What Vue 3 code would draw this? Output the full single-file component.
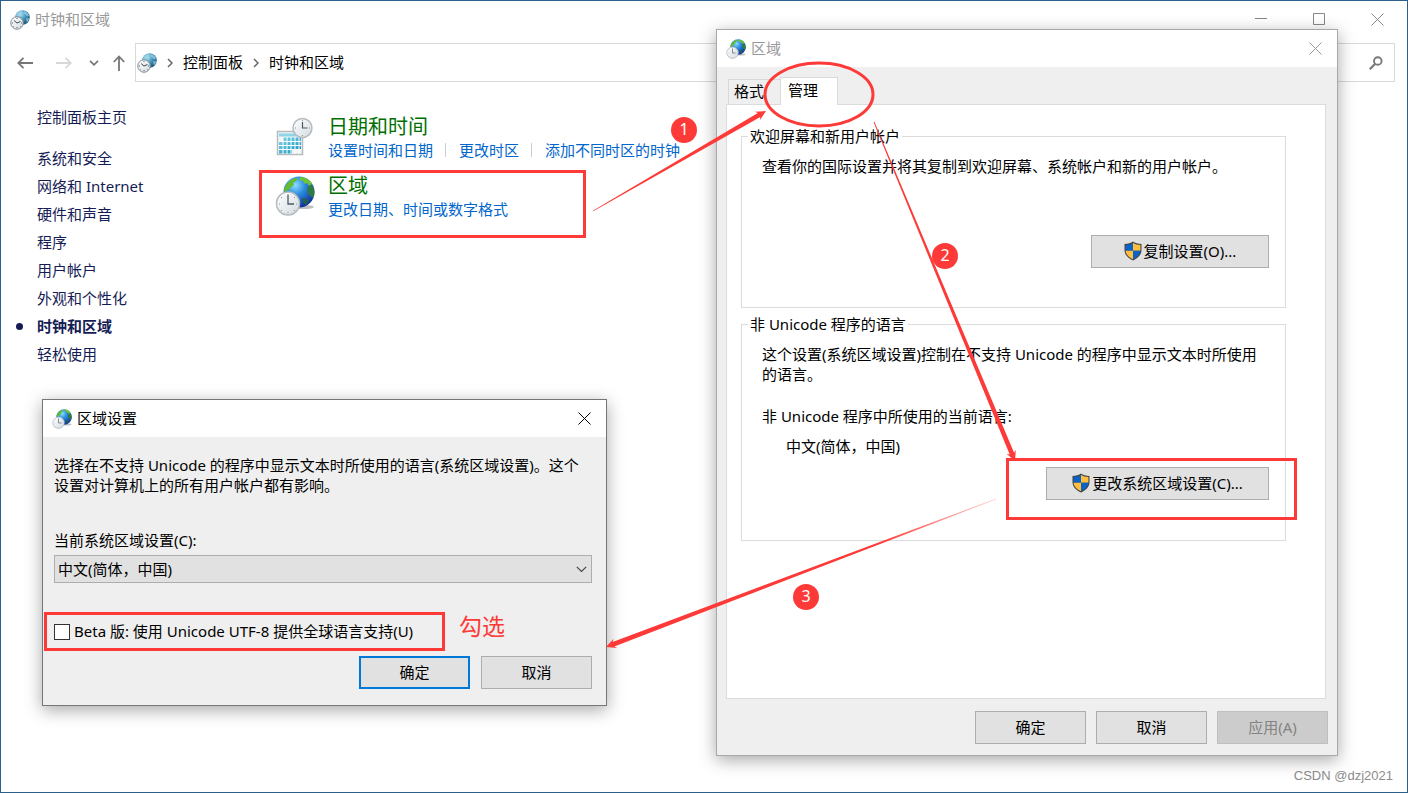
<template>
  <div class="desktop">
    <svg class="icon-defs" aria-hidden="true">
      <defs>
        <radialGradient id="oceanBlue" cx="38%" cy="28%" r="75%">
          <stop offset="0" stop-color="#8fdcff" />
          <stop offset="0.4" stop-color="#2f8fe0" />
          <stop offset="1" stop-color="#0b2c9c" />
        </radialGradient>
        <radialGradient id="oceanTeal" cx="35%" cy="28%" r="75%">
          <stop offset="0" stop-color="#b9e2f2" />
          <stop offset="0.45" stop-color="#4a9fc6" />
          <stop offset="1" stop-color="#1a5579" />
        </radialGradient>
        <linearGradient id="clockFace" x1="0" y1="0" x2="1" y2="1">
          <stop offset="0" stop-color="#ffffff" />
          <stop offset="1" stop-color="#d3dbe0" />
        </linearGradient>
        <linearGradient id="calendarCells" x1="0" y1="0" x2="1" y2="1">
          <stop offset="0" stop-color="#7fd4ea" />
          <stop offset="1" stop-color="#1593bd" />
        </linearGradient>
      </defs>
      <symbol id="icon-region" viewBox="0 0 40 40">
        <ellipse cx="28" cy="31" rx="11" ry="2" fill="#000" opacity="0.25" />
        <circle cx="24" cy="16" r="15.5" fill="url(#oceanBlue)" />
        <path d="M9 14c1-5 5-10 11-12l3 1-2 2-3 2 1 2-3 2-2 3-3 1-1 3z" fill="#62bb35" />
        <path d="M25 1c6 0 10 3 12 7l-3 2-2-3-2 1-2-3-3-1z" fill="#6cc436" />
        <path d="M33 10l4-1c2 3 3 7 2 11l-2 2-2-3-2-1-1-4z" fill="#2f7b45" />
        <path d="M27 22l5 1 2 2-3 4-3-2z" fill="#23604f" />
        <circle cx="13" cy="27.500" r="11.500" fill="url(#clockFace)" stroke="#b4bbc0" stroke-width="1.500" />
        <path d="M13 19v9h6" fill="none" stroke="#4d5a64" stroke-width="1.300" />
        <path d="M13 18v1M13 36v1M4 28h1M21 28h1M6 21l1 1M20 21l-1 1M6 35l1-1M20 35l-1-1" stroke="#8c979e" />
      </symbol>
      <symbol id="icon-clock-region" viewBox="0 0 40 40">
        <circle cx="25" cy="15" r="14.5" fill="url(#oceanTeal)" />
        <path d="M13 9c3-4 7-7 11-7l2 3-4 3-2 4-5 2-3-1zM28 2l6 3 4 6-4 2-3-4-4-2zM32 17l5-1 1 3-4 6z" fill="#9bd2e5" opacity="0.75" />
        <circle cx="14" cy="26" r="12.5" fill="url(#clockFace)" stroke="#7f898f" stroke-width="2" />
        <path d="M8 21l6 5 7-3" fill="none" stroke="#3e4a52" stroke-width="2" />
        <path d="M14 16v2M14 34v2M4 26h2M22 26h2M7 33l1-1M21 33l-1-1" stroke="#59646b" stroke-width="2" />
      </symbol>
      <symbol id="icon-datetime" viewBox="0 0 40 40">
        <path d="M2.5 14.500h25v23h-25z" fill="#f3f5f6" stroke="#b5bcc0" stroke-width="1.500" />
        <path d="M4 16.500h22v3h-22z" fill="#8fd5e8" />
        <path d="M8 20.500h18v12h-9v4h-13v-12h4z" fill="url(#calendarCells)" />
        <path d="M8 20v17M12 20v17M16 20v17M20 20v17M24 20v17M4 24.500h22M4 28.500h22M4 32.500h22" stroke="#fff" />
        <circle cx="27.500" cy="11" r="9.500" fill="url(#clockFace)" stroke="#b4bbc0" stroke-width="1.500" />
        <path d="M27.500 5v6h5" fill="none" stroke="#4d5a64" stroke-width="1.200" />
        <path d="M27.500 3v1M27.500 18v1M20 11h1M34 11h1" stroke="#8c979e" />
      </symbol>
      <symbol id="icon-shield" viewBox="0 0 18 20">
        <path d="M9 .5C7 2 4 3 .5 3v6c0 5 4 8.500 8.500 10.500 4.500-2 8.500-5.500 8.500-10.500V3C14 3 11 2 9 .5z" fill="#444" />
        <path d="M9 1.700C7 3.200 4.500 3.900 1.600 4v5.800H9z" fill="#0a63c9" />
        <path d="M9 1.700c2 1.500 4.500 2.200 7.400 2.300v5.800H9z" fill="#ffbe3c" />
        <path d="M1.600 9.800H9v8.500c-4-1.900-7.100-4.700-7.400-8.500z" fill="#ffbe3c" />
        <path d="M16.400 9.800H9v8.500c4-1.900 7.100-4.700 7.400-8.500z" fill="#0a63c9" />
      </symbol>
      <symbol id="icon-close" viewBox="0 0 13 13">
        <path d="M.5.5l12 12M12.500.5l-12 12" fill="none" stroke="currentColor" />
      </symbol>
      <symbol id="icon-chevron" viewBox="0 0 6 10">
        <path d="M1 1l4 4-4 4" fill="none" stroke="#666" stroke-width="1.500" />
      </symbol>
    </svg>

    <main class="explorer">
      <header class="titlebar">
        <svg class="small-icon"><use href="#icon-clock-region" /></svg>
        <span class="title inactive">时钟和区域</span>
        <div class="window-controls">
          <button type="button" aria-label="最小化">
            <svg width="13" height="13"><path d="M0 5.500h12" stroke="#888" /></svg>
          </button>
          <button type="button" aria-label="最大化">
            <svg width="13" height="13"><path d="M.5.5h11v11H.5z" fill="none" stroke="#888" /></svg>
          </button>
          <button type="button" aria-label="关闭">
            <svg width="13" height="13"><use href="#icon-close" /></svg>
          </button>
        </div>
      </header>

      <div class="toolbar">
        <button type="button" class="nav-btn" aria-label="后退">
          <svg width="16" height="12"><path d="M16 6H1M6.500.8L1.200 6l5.300 5.200" fill="none" stroke="#777" stroke-width="1.800" /></svg>
        </button>
        <button type="button" class="nav-btn" aria-label="前进" disabled>
          <svg width="16" height="12"><path d="M0 6h15M9.500.8L14.800 6l-5.300 5.200" fill="none" stroke="#d8d8d8" stroke-width="1.800" /></svg>
        </button>
        <button type="button" class="nav-btn recent" aria-label="最近浏览的位置">
          <svg width="10" height="6"><path d="M1 .8l4 4 4-4" fill="none" stroke="#777" stroke-width="1.700" /></svg>
        </button>
        <button type="button" class="nav-btn up" aria-label="上移">
          <svg width="12" height="16"><path d="M6 16V1.500M.8 7L6 1.500 11.200 7" fill="none" stroke="#777" stroke-width="1.800" /></svg>
        </button>
        <nav class="address">
          <svg class="small-icon"><use href="#icon-clock-region" /></svg>
          <template v-for="crumb in crumbs" :key="crumb">
            <svg class="crumb-sep"><use href="#icon-chevron" x="0" y="0" width="6" height="10" /></svg>
            <a href="#">{{ crumb }}</a>
          </template>
        </nav>
        <div class="search">
          <input v-model="keyword" type="search" aria-label="搜索控制面板" />
          <svg width="14" height="14">
            <circle cx="8.800" cy="5" r="3.800" fill="none" stroke="#777" stroke-width="1.900" />
            <path d="M6.200 7.800L.8 13.200" stroke="#777" stroke-width="2.200" />
          </svg>
        </div>
      </div>

      <div class="content">
        <nav class="sidebar">
          <a class="home" href="#">控制面板主页</a>
          <a
            v-for="item in sidebarItems"
            :key="item"
            href="#"
            :class="{ current: item === currentItem }"
          >{{ item }}</a>
        </nav>
        <div class="categories">
          <section v-for="category in categories" :key="category.name" class="category">
            <svg class="category-icon"><use :href="category.icon" /></svg>
            <div>
              <h2><a href="#">{{ category.name }}</a></h2>
              <div class="tasks">
                <a v-for="task in category.tasks" :key="task" href="#">{{ task }}</a>
              </div>
            </div>
          </section>
        </div>
      </div>
      <footer class="watermark">CSDN @dzj2021</footer>
    </main>

    <section class="dialog region-dialog">
      <header class="dialog-title">
        <svg class="small-icon"><use href="#icon-region" /></svg>
        <span class="title inactive">区域</span>
        <button type="button" class="close inactive" aria-label="关闭">
          <svg width="13" height="13"><use href="#icon-close" /></svg>
        </button>
      </header>
      <div class="region-body">
        <div class="tabs" role="tablist">
          <button
            v-for="tab in tabs"
            :key="tab"
            type="button"
            role="tab"
            :aria-selected="tab === activeTab"
            :class="['tab', { active: tab === activeTab }]"
            @click="activeTab = tab"
          >{{ tab }}</button>
        </div>
        <div class="panel">
          <fieldset>
            <legend>欢迎屏幕和新用户帐户</legend>
            <p>查看你的国际设置并将其复制到欢迎屏幕、系统帐户和新的用户帐户。</p>
            <button type="button" class="btn copy">
              <svg class="shield"><use href="#icon-shield" /></svg>复制设置(O)...
            </button>
          </fieldset>
          <fieldset>
            <legend>非 Unicode 程序的语言</legend>
            <p>这个设置(系统区域设置)控制在不支持 Unicode 的程序中显示文本时所使用的语言。</p>
            <p class="current-label">非 Unicode 程序中所使用的当前语言:</p>
            <p class="current-locale">{{ locale }}</p>
            <button type="button" class="btn change">
              <svg class="shield"><use href="#icon-shield" /></svg>更改系统区域设置(C)...
            </button>
          </fieldset>
        </div>
        <div class="actions">
          <button type="button" class="btn">确定</button>
          <button type="button" class="btn">取消</button>
          <button type="button" class="btn" disabled>应用(A)</button>
        </div>
      </div>
    </section>

    <section class="dialog locale-dialog">
      <header class="dialog-title">
        <svg class="small-icon"><use href="#icon-region" /></svg>
        <span class="title">区域设置</span>
        <button type="button" class="close" aria-label="关闭">
          <svg width="13" height="13"><use href="#icon-close" /></svg>
        </button>
      </header>
      <form class="locale-body" @submit.prevent>
        <p>选择在不支持 Unicode 的程序中显示文本时所使用的语言(系统区域设置)。这个设置对计算机上的所有用户帐户都有影响。</p>
        <label class="select-label" for="locale">当前系统区域设置(C):</label>
        <div class="select-wrap">
          <select id="locale" v-model="locale">
            <option>中文(简体，中国)</option>
          </select>
          <svg class="select-arrow" width="11" height="7"><path d="M.8.8l4.700 4.700L10.200.8" fill="none" stroke="#444" stroke-width="1.200" /></svg>
        </div>
        <div class="check-row">
          <input id="utf8" v-model="useUtf8" type="checkbox" />
          <label for="utf8">Beta 版: 使用 Unicode UTF-8 提供全球语言支持(U)</label>
        </div>
        <div class="actions">
          <button type="submit" class="btn primary">确定</button>
          <button type="button" class="btn">取消</button>
        </div>
      </form>
    </section>

    <!-- 标注层 -->
    <svg class="marks" aria-hidden="true">
      <defs>
        <linearGradient id="fadeIn" gradientUnits="userSpaceOnUse" x1="996" y1="499" x2="880" y2="543">
          <stop offset="0" stop-color="#fd3a37" stop-opacity="0.2" />
          <stop offset="1" stop-color="#fd3a37" />
        </linearGradient>
      </defs>
      <rect v-for="(box, i) in boxes" :key="i" class="outline" v-bind="box" />
      <ellipse class="outline" cx="819" cy="94.500" rx="54" ry="31.500" />
      <polygon
        v-for="(arrow, i) in arrows"
        :key="i"
        :points="arrowPoints(arrow)"
        :fill="arrow.fill"
      />
    </svg>
    <span v-for="n in 3" :key="n" :class="['step', 'step-' + n]">{{ n }}</span>
    <span class="tick-note">勾选</span>
  </div>
</template>

<script setup>
import { ref } from 'vue'

const keyword = ref('')
const locale = ref('中文(简体，中国)')
const useUtf8 = ref(false)
const activeTab = ref('管理')
const tabs = ['格式', '管理']

const crumbs = ['控制面板', '时钟和区域']

const currentItem = '时钟和区域'
const sidebarItems = [
  '系统和安全',
  '网络和 Internet',
  '硬件和声音',
  '程序',
  '用户帐户',
  '外观和个性化',
  '时钟和区域',
  '轻松使用'
]

const categories = [
  {
    name: '日期和时间',
    icon: '#icon-datetime',
    tasks: ['设置时间和日期', '更改时区', '添加不同时区的时钟']
  },
  {
    name: '区域',
    icon: '#icon-region',
    tasks: ['更改日期、时间或数字格式']
  }
]

const boxes = [
  { x: 260.5, y: 171.5, width: 324, height: 65 },
  { x: 1007.5, y: 459.5, width: 288, height: 59 },
  { x: 45.5, y: 613.5, width: 398, height: 36 }
]

const arrows = [
  { from: [593, 211], to: [766, 111], fill: '#fd3a37' },
  { from: [874, 122], to: [1015, 461], fill: '#fd3a37' },
  { from: [996, 499], to: [606, 647], fill: 'url(#fadeIn)' }
]

// 由细到粗的箭头轮廓
function arrowPoints({ from, to }) {
  const dx = to[0] - from[0]
  const dy = to[1] - from[1]
  const len = Math.hypot(dx, dy)
  const at = (along, side) => {
    const x = from[0] + (dx * along - dy * side) / len
    const y = from[1] + (dy * along + dx * side) / len
    return `${x.toFixed(1)},${y.toFixed(1)}`
  }
  const neck = len - 8
  return [
    at(0, 0.4),
    at(neck, 2.4),
    at(len - 10, 5),
    at(len, 0),
    at(len - 10, -5),
    at(neck, -2.4),
    at(0, -0.4)
  ].join(' ')
}
</script>

<style>
body {
  margin: 0;
}
</style>

<style scoped>
.desktop {
  position: relative;
  min-height: 100vh;
  overflow: hidden;
  font-family: "Noto Sans", "Noto Sans CJK SC", sans-serif;
  font-size: 15px;
  line-height: 20px;
  color: #000;
}

.desktop * {
  box-sizing: border-box;
}

button,
input,
select {
  font: inherit;
  color: inherit;
}

button {
  border: 0;
  padding: 0;
  background: none;
}

a {
  color: inherit;
  text-decoration: none;
}

p,
h2 {
  margin: 0;
}

svg {
  flex: none;
}

.icon-defs {
  position: absolute;
  width: 0;
  height: 0;
}

.small-icon {
  width: 20px;
  height: 20px;
}

.explorer {
  display: flex;
  flex-direction: column;
  min-height: 100vh;
  border: 1px solid #2c5f8a;
  background: #fff;
}

.titlebar {
  display: flex;
  align-items: center;
  height: 37px;
  padding: 0 1px 0 9px;
}

.title {
  margin-left: 5px;
  padding-bottom: 2px;
}

.inactive {
  color: #999;
}

.window-controls {
  display: flex;
  margin-left: auto;
  color: #888;
}

.window-controls button {
  display: flex;
  align-items: center;
  justify-content: center;
  width: 58px;
  height: 37px;
}

.toolbar {
  display: flex;
  align-items: stretch;
  height: 39px;
  margin: 5px 12px 0 4px;
}

.nav-btn {
  display: flex;
  align-items: center;
  justify-content: center;
  width: 39px;
}

.nav-btn.recent {
  width: 22px;
}

.nav-btn.up {
  width: 28px;
  margin-right: 2px;
}

.address {
  display: flex;
  flex: 1;
  align-items: center;
  padding-left: 1px;
  border: 1px solid #d9d9d9;
}

.address a {
  padding-bottom: 2px;
}

.crumb-sep {
  width: 6px;
  height: 10px;
  margin: 0 10px;
}

.search {
  display: flex;
  align-items: center;
  width: 320px;
  margin-left: 12px;
  padding-right: 11px;
  border: 1px solid #d9d9d9;
}

.search input {
  flex: 1;
  min-width: 0;
  border: 0;
  outline: 0;
  background: transparent;
}

.content {
  display: flex;
  flex: 1;
}

.sidebar {
  display: flex;
  flex-direction: column;
  align-items: flex-start;
  gap: 8px;
  width: 274px;
  padding: 25px 0 0 36px;
  color: #151c55;
}

.sidebar .home {
  margin-bottom: 13px;
}

.sidebar .current {
  position: relative;
  font-weight: bold;
}

.sidebar .current::before {
  content: "";
  position: absolute;
  left: -21px;
  top: 7px;
  width: 7px;
  height: 7px;
  border-radius: 50%;
  background: #151c55;
}

.categories {
  display: flex;
  flex-direction: column;
  gap: 14px;
  padding-top: 33px;
}

.category {
  display: flex;
  gap: 13px;
}

.category-icon {
  width: 40px;
  height: 40px;
  margin-top: 2px;
}

.category h2 {
  margin-bottom: 1px;
  font-size: 20px;
  font-weight: normal;
  line-height: 24px;
  color: #006f00;
}

.tasks {
  display: flex;
  align-items: center;
  height: 20px;
  color: #0066cc;
}

.tasks a {
  line-height: 14px;
}

.tasks a + a {
  margin-left: 12px;
  padding-left: 13px;
  border-left: 1px solid #ccc;
}

.watermark {
  align-self: flex-end;
  padding: 0 14px 6px 0;
  font-family: "Liberation Sans", sans-serif;
  font-size: 13px;
  color: #8c8c8c;
}

.dialog {
  position: absolute;
  background: #efefef;
  box-shadow: 0 4px 16px rgba(0, 0, 0, 0.35);
}

.dialog-title {
  display: flex;
  align-items: center;
  height: 37px;
  padding-left: 9px;
  background: #fff;
}

.close {
  display: flex;
  align-items: center;
  justify-content: center;
  width: 43px;
  height: 36px;
  margin-left: auto;
}

.region-dialog {
  left: 716px;
  top: 29px;
  width: 622px;
  border: 1px solid #a8a8a8;
}

.region-body {
  padding: 10px 11px 11px 9px;
}

.tabs {
  display: flex;
  align-items: flex-end;
  padding-left: 2px;
}

.tab {
  height: 25px;
  padding: 0 16px 2px 5px;
  border: 1px solid #d9d9d9;
  border-bottom: 0;
}

.tab.active {
  position: relative;
  height: 28px;
  margin-bottom: -1px;
  padding: 0 19px 3px 7px;
  background: #fff;
}

.tab:not(.active) {
  border-right: 0;
}

.panel {
  padding: 21px 39px 157px 14px;
  border: 1px solid #dcdcdc;
  background: #fff;
}

fieldset {
  display: flow-root;
  min-width: 0;
  margin: 0;
  padding: 0 16px 39px 6px;
  border: 1px solid #dcdcdc;
}

fieldset + fieldset {
  margin-top: 6px;
  padding-bottom: 40px;
}

legend {
  padding: 0 2px;
}

fieldset p {
  margin: 10px 0 0 14px;
}

fieldset .current-label {
  margin-top: 22px;
}

fieldset .current-locale {
  margin-left: 38px;
}

.btn {
  display: flex;
  align-items: center;
  justify-content: center;
  width: 111px;
  height: 33px;
  padding-bottom: 2px;
  border: 1px solid #adadad;
  background: #e1e1e1;
}

.btn:disabled {
  border-color: #bfbfbf;
  background: #ccc;
  color: #838383;
}

.btn.primary {
  border: 2px solid #0078d7;
}

.btn.copy {
  width: 178px;
  margin: 59px 0 0 auto;
}

.btn.change {
  width: 223px;
  margin: 11px 0 0 auto;
}

.shield {
  width: 18px;
  height: 20px;
  margin-right: 2px;
}

.actions {
  display: flex;
  justify-content: flex-end;
  gap: 10px;
}

.region-body .actions {
  margin: 12px -2px 0 0;
}

.locale-dialog {
  left: 42px;
  top: 399px;
  width: 565px;
  border: 1px solid #767676;
}

.locale-body {
  padding: 18px 14px 16px 11px;
}

.locale-body .actions {
  gap: 11px;
}

.select-label {
  display: block;
  margin-top: 35px;
}

.select-wrap {
  position: relative;
  margin-top: 5px;
}

select {
  display: block;
  width: 100%;
  height: 28px;
  padding: 0 24px 0 3px;
  border: 1px solid #adadad;
  border-radius: 0;
  background: #e1e1e1;
  appearance: none;
}

.select-arrow {
  position: absolute;
  right: 5px;
  top: 11px;
  pointer-events: none;
}

.check-row {
  display: flex;
  align-items: center;
  gap: 4px;
  margin: 38px 0 13px;
}

.check-row label {
  padding-bottom: 2px;
}

.check-row input {
  width: 16px;
  height: 16px;
  margin: 0;
  border: 1px solid #333;
  background: #fff;
  appearance: none;
}

.check-row input:checked {
  background: #0078d7;
}

.marks {
  position: absolute;
  inset: 0;
  width: 100%;
  height: 100%;
  pointer-events: none;
}

.outline {
  fill: none;
  stroke: #fd3a37;
  stroke-width: 3;
}

.step {
  position: absolute;
  width: 26px;
  height: 26px;
  border-radius: 50%;
  background: #fd3a37;
  color: #fff;
  font-size: 16px;
  line-height: 24px;
  text-align: center;
}

.step-1 {
  left: 671px;
  top: 117px;
}

.step-2 {
  left: 932px;
  top: 243px;
}

.step-3 {
  left: 793px;
  top: 584px;
}

.tick-note {
  position: absolute;
  left: 459px;
  top: 611px;
  font-size: 23px;
  line-height: 30px;
  color: #fd3a37;
}
</style>
